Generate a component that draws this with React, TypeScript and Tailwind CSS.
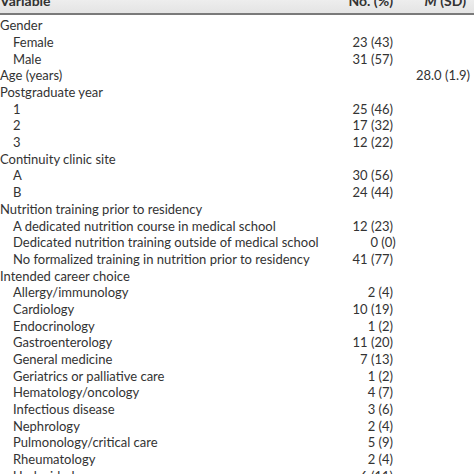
import React from 'react';

type Row = { label: string; indent?: boolean; n?: string; m?: string };

const rows: Row[] = [
  { label: 'Gender' },
  { label: 'Female', indent: true, n: '23 (43)' },
  { label: 'Male', indent: true, n: '31 (57)' },
  { label: 'Age (years)', m: '28.0 (1.9)' },
  { label: 'Postgraduate year' },
  { label: '1', indent: true, n: '25 (46)' },
  { label: '2', indent: true, n: '17 (32)' },
  { label: '3', indent: true, n: '12 (22)' },
  { label: 'Continuity clinic site' },
  { label: 'A', indent: true, n: '30 (56)' },
  { label: 'B', indent: true, n: '24 (44)' },
  { label: 'Nutrition training prior to residency' },
  { label: 'A dedicated nutrition course in medical school', indent: true, n: '12 (23)' },
  { label: 'Dedicated nutrition training outside of medical school', indent: true, n: '0 (0)' },
  { label: 'No formalized training in nutrition prior to residency', indent: true, n: '41 (77)' },
  { label: 'Intended career choice' },
  { label: 'Allergy/immunology', indent: true, n: '2 (4)' },
  { label: 'Cardiology', indent: true, n: '10 (19)' },
  { label: 'Endocrinology', indent: true, n: '1 (2)' },
  { label: 'Gastroenterology', indent: true, n: '11 (20)' },
  { label: 'General medicine', indent: true, n: '7 (13)' },
  { label: 'Geriatrics or palliative care', indent: true, n: '1 (2)' },
  { label: 'Hematology/oncology', indent: true, n: '4 (7)' },
  { label: 'Infectious disease', indent: true, n: '3 (6)' },
  { label: 'Nephrology', indent: true, n: '2 (4)' },
  { label: 'Pulmonology/critical care', indent: true, n: '5 (9)' },
  { label: 'Rheumatology', indent: true, n: '2 (4)' },
  { label: 'Undecided', indent: true, n: '6 (11)' },
];

export default function App() {
  return (
    <div className="w-[474px] h-[474px] overflow-hidden bg-white text-[#333] font-['Lato',sans-serif] text-[13px]">
      {/* header, cut off at the top edge */}
      <div className="-mt-[13px] h-[28px] flex items-center bg-gradient-to-b from-[#f7f7f7] to-[#e4e4e4] border-b-2 border-[#7a7a7a] font-bold text-[14px]">
        <div className="flex-1">Variable</div>
        <div className="w-[80px] pr-[0px] -mr-[3px] text-right">No. (%)</div>
        <div className="w-[84px] pr-[8px] text-right">
          <i>M</i> (SD)
        </div>
      </div>

      <div className="pt-[2.7px]">
        {rows.map((r, i) => (
          <div key={i} className="flex items-center h-[16.7px] whitespace-nowrap">
            <div className={`flex-1 ${r.indent ? 'pl-[13px]' : ''}`}>{r.label}</div>
            <div className="w-[80px] text-right">{r.n}</div>
            <div className="w-[81px] pr-[4px] text-right">{r.m}</div>
          </div>
        ))}
      </div>
    </div>
  );
}
